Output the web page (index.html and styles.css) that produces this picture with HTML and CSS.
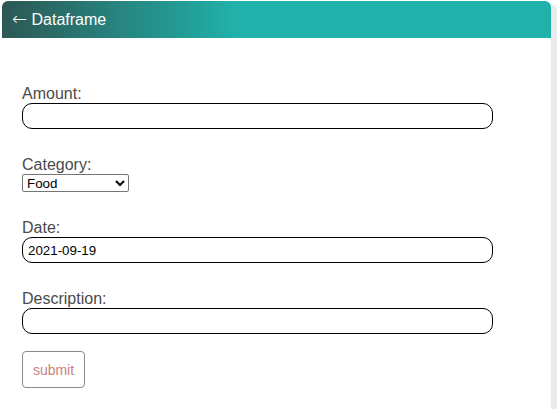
FILE: index.html
```html
<!DOCTYPE html>
<html>
<head>
<meta charset="utf-8">
<link rel="stylesheet" href="styles.css">
</head>
<body>
<div class="card">
  <div class="header"><span class="arrow">←</span> Dataframe</div>
  <form class="form">
    <div class="field">
      <label class="label">Amount:</label>
      <input class="input" type="text">
    </div>
    <div class="field">
      <label class="label">Category:</label>
      <select class="select">
        <option>Food</option>
      </select>
    </div>
    <div class="field">
      <label class="label">Date:</label>
      <input class="input" type="text" value="2021-09-19">
    </div>
    <div class="field">
      <label class="label">Description:</label>
      <input class="input" type="text">
    </div>
    <button class="submit" type="button">submit</button>
  </form>
</div>
</body>
</html>
```
FILE: styles.css
```css
html, body {
  margin: 0;
  padding: 0;
  background: #fff;
  font-family: "Liberation Sans", Arial, sans-serif;
}
body {
  padding: 1px 6px 0 2px;
}
.card {
  width: 549px;
  height: 408px;
  background: #fff;
  border-radius: 6px 6px 0 0;
  box-shadow: 5px 5px 1px 2px #ebebeb;
}
.header {
  height: 37px;
  line-height: 36px;
  padding-left: 10px;
  color: #fff;
  font-size: 16px;
  border-radius: 6px 6px 0 0;
  background: linear-gradient(to right, #2d5754, #20b2aa 43%);
}
.arrow {
  font-family: "DejaVu Sans", sans-serif;
  font-size: 18px;
  font-weight: 300;
}
.form {
  display: flex;
  flex-direction: column;
  align-items: flex-start;
  gap: 27px;
  padding: 47px 0 0 20px;
}
.field {
  display: flex;
  flex-direction: column;
  align-items: flex-start;
}
.label {
  font-size: 16px;
  line-height: 18px;
  color: #4a4a4a;
}
.input {
  box-sizing: border-box;
  width: 471px;
  height: 26px;
  margin: 0;
  padding: 0 5px;
  border: 1px solid #000;
  border-radius: 10px;
  font-family: "Liberation Sans", Arial, sans-serif;
  font-size: 13.33px;
  color: #000;
  background: #fff;
  outline: none;
}
.select {
  box-sizing: border-box;
  width: 107px;
  height: 18px;
  margin: 0;
  font-family: "Liberation Sans", Arial, sans-serif;
  font-size: 13.33px;
  border: 1px solid #767676;
  border-radius: 2px;
  background: #fff;
  color: #000;
}
.submit {
  box-sizing: border-box;
  margin-top: -10px;
  width: 63px;
  height: 37px;
  padding: 0;
  border: 1px solid #8a8a8a;
  border-radius: 4px;
  background: #fff;
  color: #c9827c;
  font-family: "Liberation Sans", Arial, sans-serif;
  font-size: 14px;
}
```
